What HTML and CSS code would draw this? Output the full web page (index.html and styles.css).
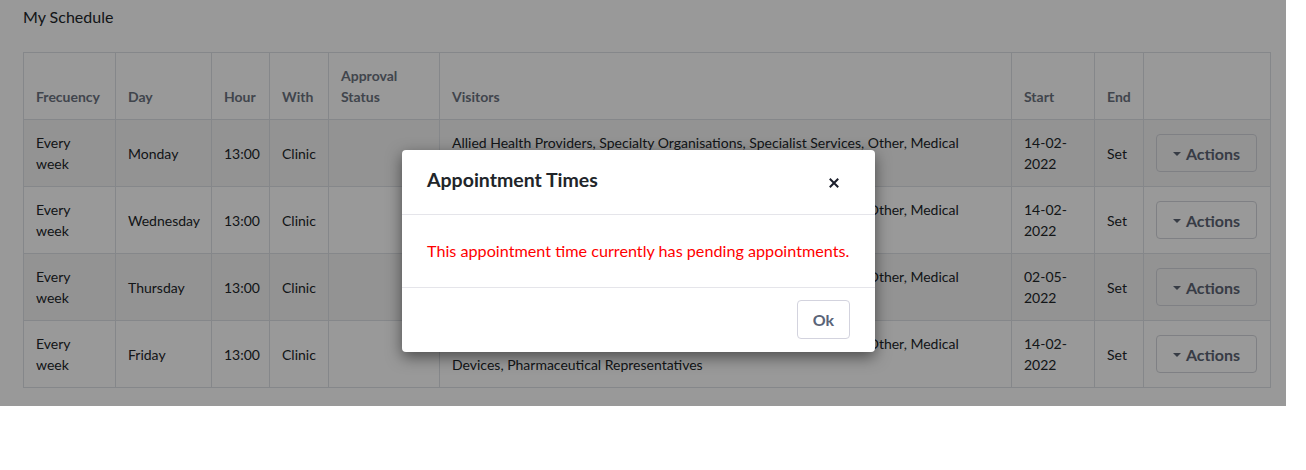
FILE: index.html
```html
<!DOCTYPE html>
<html>
<head>
<meta charset="utf-8">
<link rel="stylesheet" href="styles.css">
</head>
<body>
<div class="page">
  <div class="content">
    <h2 class="title">My Schedule</h2>
    <table class="sched">
      <colgroup>
        <col class="c1"><col class="c2"><col class="c3"><col class="c4"><col class="c5"><col class="c6"><col class="c7"><col class="c8"><col class="c9">
      </colgroup>
      <thead>
        <tr><th>Frecuency</th><th>Day</th><th>Hour</th><th>With</th><th>Approval Status</th><th>Visitors</th><th>Start</th><th>End</th><th></th></tr>
      </thead>
      <tbody>
        <tr><td>Every week</td><td>Monday</td><td>13:00</td><td>Clinic</td><td></td><td>Allied Health Providers, Specialty Organisations, Specialist Services, Other, Medical Devices, Pharmaceutical Representatives</td><td>14-02-2022</td><td>Set</td><td><button class="act"><span class="caret"></span>Actions</button></td></tr>
        <tr><td>Every week</td><td>Wednesday</td><td>13:00</td><td>Clinic</td><td></td><td>Allied Health Providers, Specialty Organisations, Specialist Services, Other, Medical Devices, Pharmaceutical Representatives</td><td>14-02-2022</td><td>Set</td><td><button class="act"><span class="caret"></span>Actions</button></td></tr>
        <tr><td>Every week</td><td>Thursday</td><td>13:00</td><td>Clinic</td><td></td><td>Allied Health Providers, Specialty Organisations, Specialist Services, Other, Medical Devices, Pharmaceutical Representatives</td><td>02-05-2022</td><td>Set</td><td><button class="act"><span class="caret"></span>Actions</button></td></tr>
        <tr><td>Every week</td><td>Friday</td><td>13:00</td><td>Clinic</td><td></td><td>Allied Health Providers, Specialty Organisations, Specialist Services, Other, Medical Devices, Pharmaceutical Representatives</td><td>14-02-2022</td><td>Set</td><td><button class="act"><span class="caret"></span>Actions</button></td></tr>
      </tbody>
    </table>
  </div>
  <div class="backdrop"></div>
  <div class="modal">
    <div class="modal-header">
      <h4 class="modal-title">Appointment Times</h4>
      <button class="close" aria-label="Close"><svg width="10" height="10" viewBox="0 0 10 10"><path d="M1.5 1.5L8.5 8.5M8.5 1.5L1.5 8.5" stroke="#1b1e2b" stroke-width="2" stroke-linecap="square"/></svg></button>
    </div>
    <div class="modal-body">This appointment time currently has pending appointments.</div>
    <div class="modal-footer"><button class="ok">Ok</button></div>
  </div>
</div>
</body>
</html>
```
FILE: styles.css
```css
* { box-sizing: border-box; }
html, body { margin: 0; padding: 0; background: #fff; }
body { font-family: "Lato", "Open Sans", sans-serif; color: #212529; }

.page { position: relative; width: 1286px; height: 406px; }
.content { padding: 5px 16px 0 23px; }
.title { margin: 0 0 23px; font-size: 16px; font-weight: 400; line-height: 24px; color: #212529; }

.sched { border-collapse: collapse; table-layout: fixed; width: 1247px; font-size: 14px; line-height: 21px; }
.c1 { width: 92px; } .c2 { width: 96px; } .c3 { width: 58px; } .c4 { width: 59px; } .c5 { width: 111px; }
.c6 { width: 572px; } .c7 { width: 83px; } .c8 { width: 49px; } .c9 { width: 127px; }
.sched th, .sched td { border: 1px solid #dee2e6; padding: 12px; text-align: left; }
.sched th { vertical-align: bottom; font-weight: 700; color: #6c7380; }
.sched td { vertical-align: middle; color: #212529; }
.sched tbody tr:nth-child(odd) td { background: #f6f6f6; }

.act { display: flex; align-items: center; justify-content: center; width: 101px; height: 38px; border: 1px solid #d4d6dc; border-radius: 4px; background: transparent; font: 700 16px "Lato", sans-serif; color: #5d6474; padding: 0; }
.caret { width: 0; height: 0; border-left: 4px solid transparent; border-right: 4px solid transparent; border-top: 4px solid #5d6474; margin-right: 5px; margin-top: 2px; }

.backdrop { position: absolute; inset: 0; background: rgba(0,0,0,0.4); }

.modal { position: absolute; left: 402px; top: 150px; width: 473px; background: #fff; border-radius: 4px; box-shadow: 0 5px 15px rgba(0,0,0,0.5); }
.modal-header { display: flex; align-items: center; justify-content: space-between; padding: 16px 36px 21px 25px; border-bottom: 1px solid #e5e5ea; }
.modal-title { margin: 0; font-size: 19.5px; font-weight: 700; line-height: 27px; color: #212529; }
.close { border: 0; background: none; padding: 0; margin-top: 6px; display: flex; }
.modal-body { padding: 25px; font-size: 16.2px; line-height: 22px; color: #ff0000; }
.modal-footer { display: flex; justify-content: flex-end; padding: 12px 25px 13px; border-top: 1px solid #e5e5ea; }
.ok { width: 53px; height: 39px; border: 1px solid #d3d3de; border-radius: 4px; background: #fff; font: 700 16px "Lato", sans-serif; color: #5a6478; padding: 0; }
```
